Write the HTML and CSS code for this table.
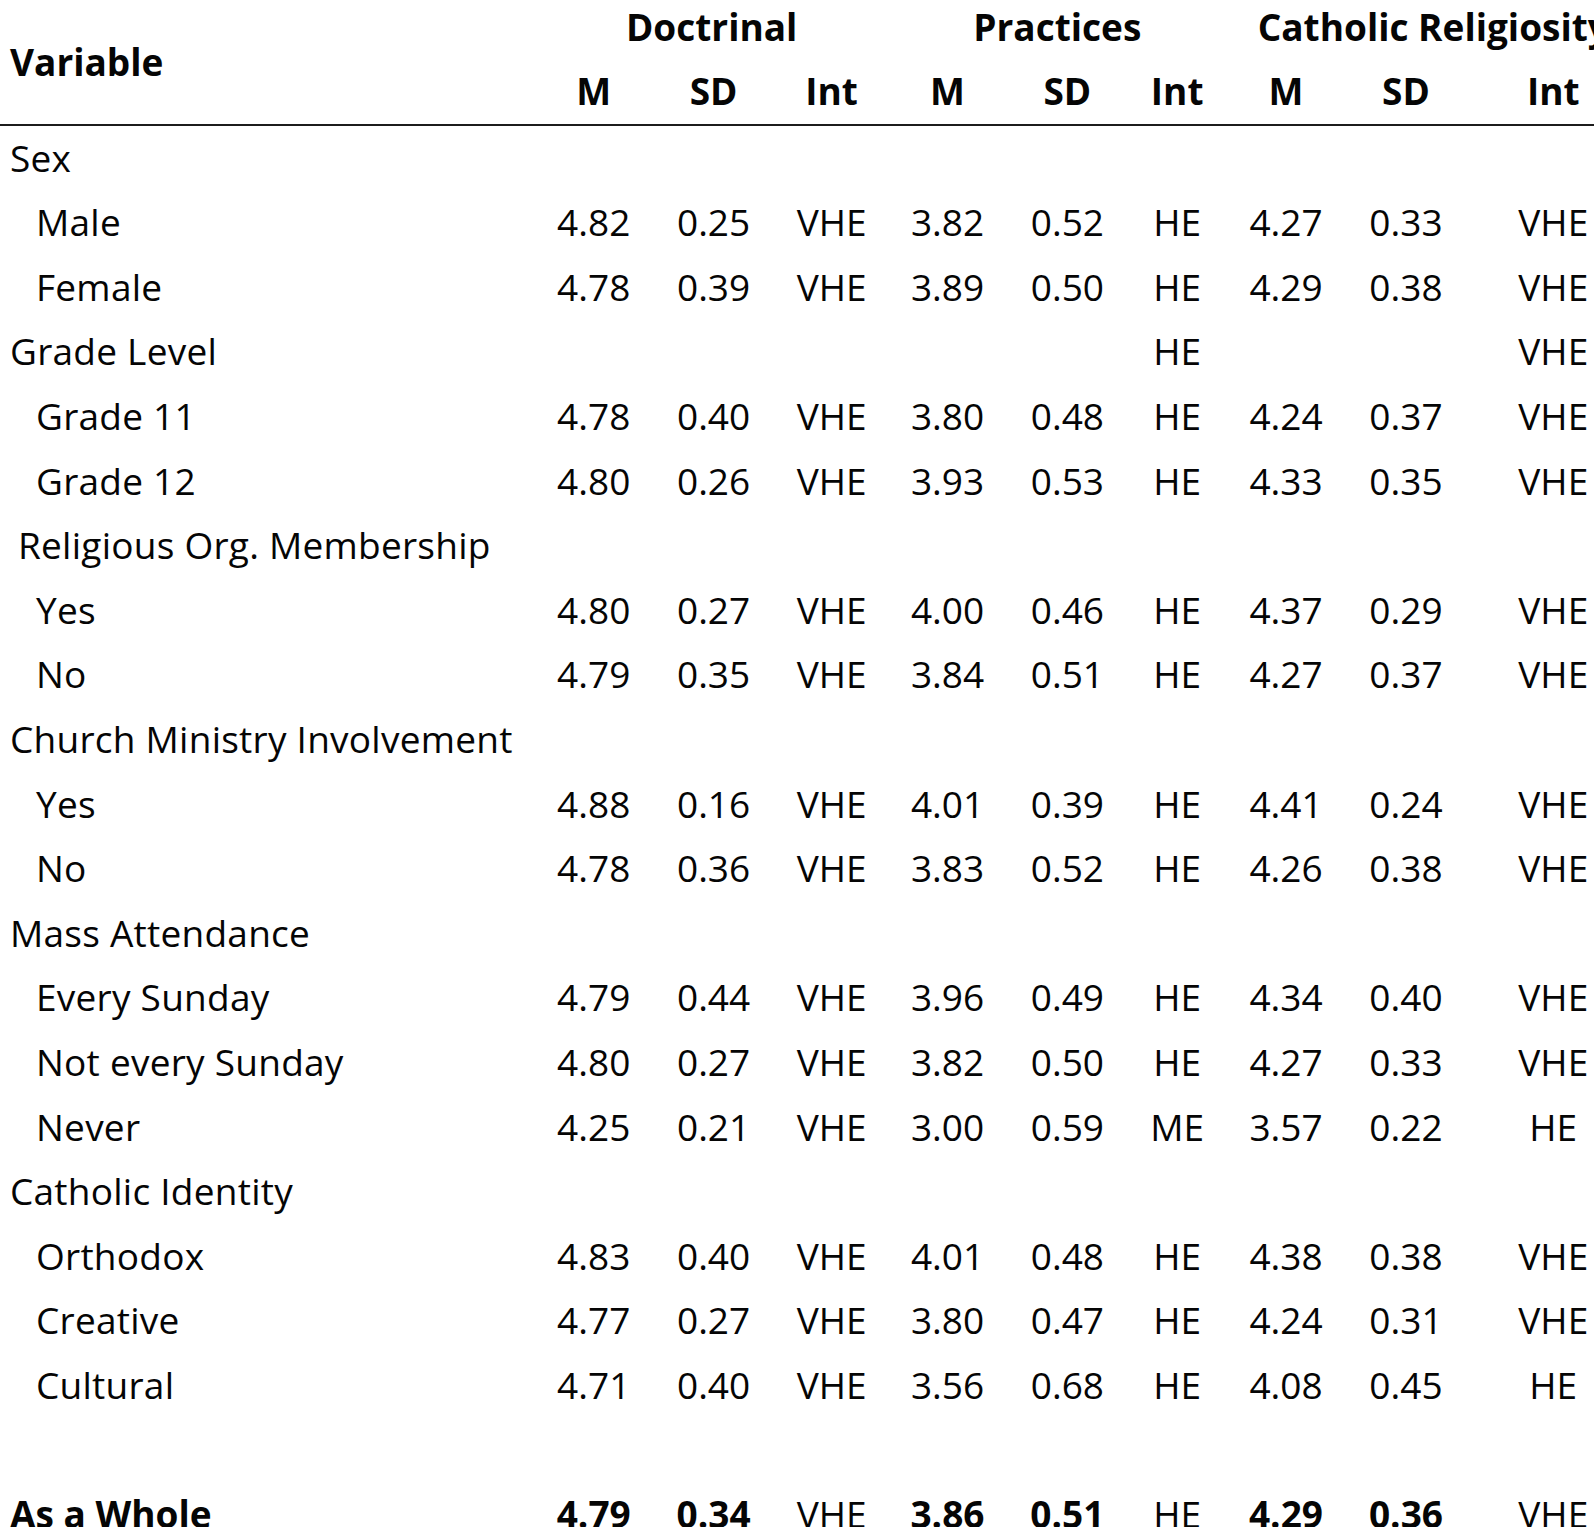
FILE: index.html
```html
<!DOCTYPE html>
<html lang="en">
<head>
<meta charset="utf-8">
<title>Catholic Religiosity by Profile</title>
<link rel="stylesheet" href="styles.css">
</head>
<body>
<table class="stats">
  <colgroup>
    <col class="c-var">
    <col class="c1"><col class="c2"><col class="c3">
    <col class="c4"><col class="c5"><col class="c6">
    <col class="c7"><col class="c8"><col class="c9">
  </colgroup>
  <thead>
    <tr class="h1">
      <th rowspan="2" class="var-head">Variable</th>
      <th colspan="3">Doctrinal</th>
      <th colspan="3">Practices</th>
      <th colspan="3" class="nowrap">Catholic Religiosity</th>
    </tr>
    <tr class="h2">
      <th>M</th><th>SD</th><th>Int</th>
      <th>M</th><th>SD</th><th>Int</th>
      <th>M</th><th>SD</th><th>Int</th>
    </tr>
  </thead>
  <tbody>
    <tr><td class="cat">Sex</td><td></td><td></td><td></td><td></td><td></td><td></td><td></td><td></td><td></td></tr>
    <tr><td class="item">Male</td><td>4.82</td><td>0.25</td><td>VHE</td><td>3.82</td><td>0.52</td><td>HE</td><td>4.27</td><td>0.33</td><td>VHE</td></tr>
    <tr><td class="item">Female</td><td>4.78</td><td>0.39</td><td>VHE</td><td>3.89</td><td>0.50</td><td>HE</td><td>4.29</td><td>0.38</td><td>VHE</td></tr>
    <tr><td class="cat">Grade Level</td><td></td><td></td><td></td><td></td><td></td><td>HE</td><td></td><td></td><td>VHE</td></tr>
    <tr><td class="item">Grade 11</td><td>4.78</td><td>0.40</td><td>VHE</td><td>3.80</td><td>0.48</td><td>HE</td><td>4.24</td><td>0.37</td><td>VHE</td></tr>
    <tr><td class="item">Grade 12</td><td>4.80</td><td>0.26</td><td>VHE</td><td>3.93</td><td>0.53</td><td>HE</td><td>4.33</td><td>0.35</td><td>VHE</td></tr>
    <tr><td class="cat cat-shift">Religious Org. Membership</td><td></td><td></td><td></td><td></td><td></td><td></td><td></td><td></td><td></td></tr>
    <tr><td class="item">Yes</td><td>4.80</td><td>0.27</td><td>VHE</td><td>4.00</td><td>0.46</td><td>HE</td><td>4.37</td><td>0.29</td><td>VHE</td></tr>
    <tr><td class="item">No</td><td>4.79</td><td>0.35</td><td>VHE</td><td>3.84</td><td>0.51</td><td>HE</td><td>4.27</td><td>0.37</td><td>VHE</td></tr>
    <tr><td class="cat">Church Ministry Involvement</td><td></td><td></td><td></td><td></td><td></td><td></td><td></td><td></td><td></td></tr>
    <tr><td class="item">Yes</td><td>4.88</td><td>0.16</td><td>VHE</td><td>4.01</td><td>0.39</td><td>HE</td><td>4.41</td><td>0.24</td><td>VHE</td></tr>
    <tr><td class="item">No</td><td>4.78</td><td>0.36</td><td>VHE</td><td>3.83</td><td>0.52</td><td>HE</td><td>4.26</td><td>0.38</td><td>VHE</td></tr>
    <tr><td class="cat">Mass Attendance</td><td></td><td></td><td></td><td></td><td></td><td></td><td></td><td></td><td></td></tr>
    <tr><td class="item">Every Sunday</td><td>4.79</td><td>0.44</td><td>VHE</td><td>3.96</td><td>0.49</td><td>HE</td><td>4.34</td><td>0.40</td><td>VHE</td></tr>
    <tr><td class="item">Not every Sunday</td><td>4.80</td><td>0.27</td><td>VHE</td><td>3.82</td><td>0.50</td><td>HE</td><td>4.27</td><td>0.33</td><td>VHE</td></tr>
    <tr><td class="item">Never</td><td>4.25</td><td>0.21</td><td>VHE</td><td>3.00</td><td>0.59</td><td>ME</td><td>3.57</td><td>0.22</td><td>HE</td></tr>
    <tr><td class="cat">Catholic Identity</td><td></td><td></td><td></td><td></td><td></td><td></td><td></td><td></td><td></td></tr>
    <tr><td class="item">Orthodox</td><td>4.83</td><td>0.40</td><td>VHE</td><td>4.01</td><td>0.48</td><td>HE</td><td>4.38</td><td>0.38</td><td>VHE</td></tr>
    <tr><td class="item">Creative</td><td>4.77</td><td>0.27</td><td>VHE</td><td>3.80</td><td>0.47</td><td>HE</td><td>4.24</td><td>0.31</td><td>VHE</td></tr>
    <tr><td class="item">Cultural</td><td>4.71</td><td>0.40</td><td>VHE</td><td>3.56</td><td>0.68</td><td>HE</td><td>4.08</td><td>0.45</td><td>HE</td></tr>
    <tr class="spacer"><td></td><td></td><td></td><td></td><td></td><td></td><td></td><td></td><td></td><td></td></tr>
    <tr class="total"><td class="cat strong">As a Whole</td><td class="strong">4.79</td><td class="strong">0.34</td><td>VHE</td><td class="strong">3.86</td><td class="strong">0.51</td><td>HE</td><td class="strong">4.29</td><td class="strong">0.36</td><td>VHE</td></tr>
  </tbody>
</table>
</body>
</html>
```

FILE: styles.css
```css
html, body {
  margin: 0;
  padding: 0;
  overflow: hidden;
  background: #ffffff;
}

body {
  font-family: "Open Sans", "Noto Sans", "Liberation Sans", sans-serif;
  font-size: 37px;
  color: #050505;
}

.stats {
  border-collapse: collapse;
  table-layout: fixed;
  width: 1641.4px;
}

.c-var { width: 534px; }
.c1 { width: 119.4px; }
.c2 { width: 120.4px; }
.c3 { width: 115.6px; }
.c4 { width: 116.2px; }
.c5 { width: 123.6px; }
.c6 { width: 96px; }
.c7 { width: 121.6px; }
.c8 { width: 118.4px; }
.c9 { width: 176.2px; }

.stats th,
.stats td {
  padding: 0;
  text-align: center;
  white-space: nowrap;
  overflow: visible;
}

.stats th {
  font-weight: 700;
}

.h1 th {
  height: 59px;
  line-height: 53px;
  vertical-align: top;
}

.h2 th {
  height: 64.6px;
  line-height: 64.6px;
  border-bottom: 2px solid #1c1c1c;
}

.stats th.var-head {
  text-align: left;
  padding-left: 10px;
  vertical-align: middle;
  line-height: 60px;
  border-bottom: 2px solid #1c1c1c;
}

.stats td {
  height: 64.6px;
  line-height: 64.6px;
  font-weight: 400;
}

.stats td.cat {
  text-align: left;
  padding-left: 10px;
  letter-spacing: 0.25px;
}

.stats td.cat-shift {
  padding-left: 18px;
}

.stats td.item {
  text-align: left;
  padding-left: 36px;
  letter-spacing: 0.25px;
}

.stats td.strong {
  font-weight: 700;
}

.stats td.cat.strong {
  letter-spacing: 0;
}
```
